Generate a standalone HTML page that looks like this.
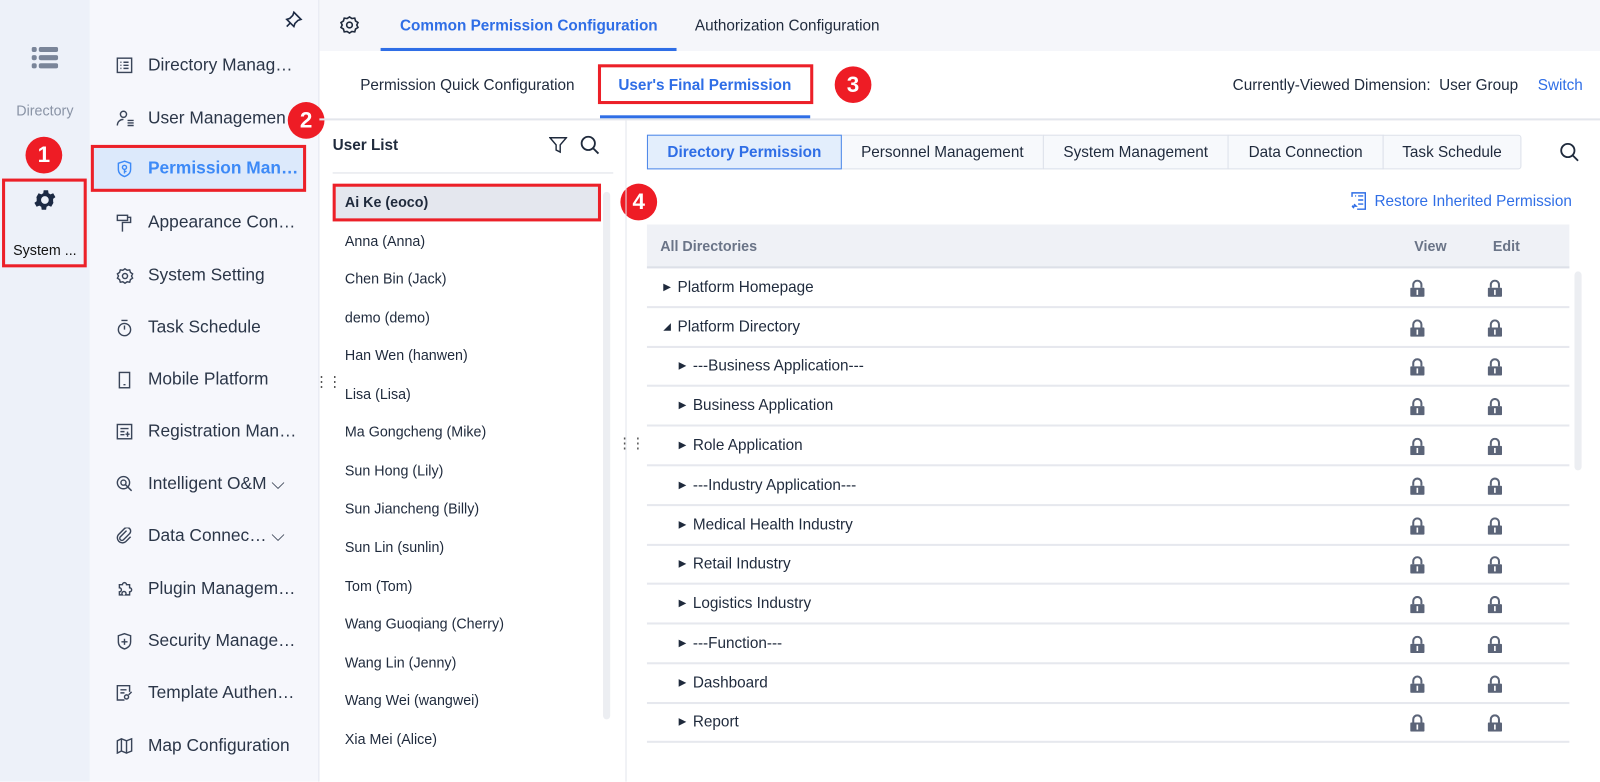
<!DOCTYPE html>
<html><head><meta charset="utf-8"><style>
*{box-sizing:border-box;margin:0;padding:0}
body{width:1600px;height:766px;overflow:hidden;background:#fff;font-family:"Liberation Sans",sans-serif;color:#1f2a3c;position:relative}
#w{position:absolute;left:0;top:0;width:1568px;height:751px;transform:scale(1.0204);transform-origin:0 0}
.a{position:absolute}
.rail{left:0;top:0;width:88px;height:766px;background:#edf1f9}
.menu{left:88px;top:0;width:225px;height:766px;background:#f6f7fc;border-right:1px solid #e3e6ee}
.mi{position:absolute;left:0;width:225px;height:40px;line-height:40px;font-size:17px;color:#2b3648;padding-left:57px;white-space:nowrap}
.mi svg{position:absolute;left:26px;top:12px}
.top{left:313px;top:0;width:1287px;height:50px;background:#f5f6fa}
.badge{position:absolute;width:36px;height:36px;border-radius:50%;background:#ee1c25;color:#fff;font-weight:bold;font-size:22px;text-align:center;line-height:36px}
.red{position:absolute;border:3px solid #ec2028}
.ul{position:absolute;left:338px;font-size:14px;color:#1f2a3c}
.row{position:absolute;left:634px;width:904px;height:39px;border-bottom:2px solid #e6e8ee;font-size:15px;line-height:38px}
.row .t{position:absolute}
.lock{position:absolute;top:11px;width:14px;height:17px}
.tab{position:absolute;top:132px;height:34px;line-height:34px;font-size:15px;text-align:center;border:1px solid #dde1ea;background:#f7f9fc;color:#1f2a3c}
</style></head><body><div id="w">
<div class="a rail"></div>
<svg class="a" style="left:31px;top:46px" width="26" height="22" viewBox="0 0 26 22"><g fill="#7a8599"><rect x="0" y="0" width="5" height="5" rx="2"/><rect x="7" y="0" width="19" height="5" rx="2"/><rect x="0" y="8" width="5" height="5" rx="2"/><rect x="7" y="8" width="19" height="5" rx="2"/><rect x="0" y="16" width="5" height="5" rx="2"/><rect x="7" y="16" width="19" height="5" rx="2"/></g></svg>
<div class="a" style="left:0;width:88px;top:100px;text-align:center;font-size:14px;color:#8a94a6">Directory</div>
<svg class="a" style="left:31px;top:183px" width="26" height="26" viewBox="0 0 24 24"><path fill="#1c2a44" d="M19.4 13a7.5 7.5 0 0 0 0-2l2.1-1.6-2-3.5-2.5 1a7.6 7.6 0 0 0-1.7-1l-.4-2.7h-4l-.4 2.7a7.6 7.6 0 0 0-1.7 1l-2.5-1-2 3.5L4.6 11a7.5 7.5 0 0 0 0 2l-2.1 1.600 2 3.5 2.5-1a7.6 7.6 0 0 0 1.7 1l.4 2.7h4l.4-2.7a7.6 7.6 0 0 0 1.7-1l2.5 1 2-3.5zM12 15.5a3.5 3.5 0 1 1 0-7 3.5 3.5 0 0 1 0 7z"/></svg>
<div class="a" style="left:4px;top:237px;width:80px;text-align:center;font-size:14px;color:#111">System ...</div>
<div class="red" style="left:2px;top:175px;width:83px;height:87px"></div>
<div class="badge" style="left:25px;top:134px">1</div>

<div class="a menu">
<svg class="a" style="left:191px;top:10px" width="18" height="18" viewBox="0 0 18 18" fill="none" stroke="#1c2a44" stroke-width="1.6"><path d="M9 2l7 7-3 1-3 3-1 3-7-7 3-1 3-3zM2 16l4-4"/></svg>
<div class="mi" style="top:44px">Directory Manag…<svg width="16" height="16" viewBox="0 0 16 16" fill="none" stroke="#3a4559" stroke-width="1.4"><rect x="1" y="1" width="14" height="14"/><path d="M4 5h1M7 5h5M4 8h1M7 8h5M4 11h1M7 11h5"/></svg></div>
<div class="mi" style="top:96px">User Managemen<svg width="18" height="16" viewBox="0 0 18 16" fill="none" stroke="#3a4559" stroke-width="1.4"><circle cx="7" cy="4" r="3"/><path d="M1 15c0-4 3-6 6-6M11 10h6M11 12.5h6M11 15h6"/></svg></div>
<div class="a" style="left:2px;top:143px;width:207px;height:44px;background:#dce9fb"></div>
<div class="mi" style="top:145px;color:#3d8af7;font-weight:bold">Permission Man…<svg width="16" height="17" viewBox="0 0 16 17" fill="none" stroke="#3d8af7" stroke-width="1.4"><path d="M8 1l6 2v6c0 4-3 6-6 7-3-1-6-3-6-7V3z"/><circle cx="8" cy="7" r="2"/><path d="M8 9v4M8 11h2"/></svg></div>
<div class="red" style="left:1px;top:142px;width:211px;height:46px"></div>
<div class="mi" style="top:198px">Appearance Con…<svg width="16" height="18" viewBox="0 0 16 18" fill="none" stroke="#3a4559" stroke-width="1.4"><rect x="1" y="1" width="10" height="5"/><path d="M11 3h3v5H6v3M6 11v6"/></svg></div>
<div class="mi" style="top:250px">System Setting<svg width="17" height="17" viewBox="0 0 24 24" fill="none" stroke="#3a4559" stroke-width="2"><path d="M12 2l3 2 3.5-.5 1 3.5 3 2-1.5 3 1.5 3-3 2-1 3.5L15 20l-3 2-3-2-3.5.5-1-3.5-3-2 1.5-3-1.5-3 3-2 1-3.5L9 4z"/><circle cx="12" cy="12" r="3.5"/></svg></div>
<div class="mi" style="top:301px">Task Schedule<svg width="16" height="17" viewBox="0 0 16 17" fill="none" stroke="#3a4559" stroke-width="1.4"><circle cx="8" cy="10" r="6"/><path d="M5 1h6M8 6v4"/></svg></div>
<div class="mi" style="top:352px">Mobile Platform<svg width="16" height="17" viewBox="0 0 16 17" fill="none" stroke="#3a4559" stroke-width="1.4"><rect x="3" y="1" width="10" height="15"/><path d="M7 13h2"/></svg></div>
<div class="mi" style="top:403px">Registration Man…<svg width="16" height="16" viewBox="0 0 16 16" fill="none" stroke="#3a4559" stroke-width="1.4"><rect x="1" y="1" width="14" height="14"/><path d="M4 5h8M4 8h4M4 11h4M11 8v5M9 10.5h4"/></svg></div>
<div class="mi" style="top:454px">Intelligent O&amp;M ⌵<svg width="16" height="16" viewBox="0 0 16 16" fill="none" stroke="#3a4559" stroke-width="1.4"><circle cx="7" cy="7" r="6"/><circle cx="7" cy="7" r="2.5"/><path d="M9 9l6 6"/></svg></div>
<div class="mi" style="top:505px">Data Connec… ⌵<svg width="16" height="16" viewBox="0 0 16 16" fill="none" stroke="#3a4559" stroke-width="1.4"><path d="M10 3L4 9a2 2 0 0 0 3 3l6-6a3.5 3.5 0 0 0-5-5L2 7a5 5 0 0 0 7 7l5-5"/></svg></div>
<div class="mi" style="top:557px">Plugin Managem…<svg width="16" height="16" viewBox="0 0 16 16" fill="none" stroke="#3a4559" stroke-width="1.4"><path d="M3 4h3a2 2 0 1 1 4 0h3v3a2 2 0 1 1 0 4v3H9a2 2 0 1 0-3 0H3v-3a2 2 0 1 0 0-4z"/></svg></div>
<div class="mi" style="top:608px">Security Manage…<svg width="16" height="17" viewBox="0 0 16 17" fill="none" stroke="#3a4559" stroke-width="1.4"><path d="M8 1l6 2v6c0 4-3 6-6 7-3-1-6-3-6-7V3z"/><path d="M8 6v6M5 9h6"/></svg></div>
<div class="mi" style="top:659px">Template Authen…<svg width="16" height="16" viewBox="0 0 16 16" fill="none" stroke="#3a4559" stroke-width="1.4"><path d="M8 15H1V1h12v6M4 5h6M4 8h4"/><circle cx="10" cy="12" r="2"/><path d="M12 10l3-3"/></svg></div>
<div class="mi" style="top:711px">Map Configuration<svg width="16" height="16" viewBox="0 0 16 16" fill="none" stroke="#3a4559" stroke-width="1.4"><path d="M1 3l4-2 5 2 5-2v12l-5 2-5-2-4 2zM5 1v12M10 3v12"/></svg></div>
</div>
<div class="badge" style="left:282px;top:100px">2</div>
<div class="a" style="left:308px;top:366px;color:#555;font-size:14px;letter-spacing:-1px">⋮⋮</div>

<div class="a top"></div>
<svg class="a" style="left:333px;top:15px" width="19" height="19" viewBox="0 0 24 24" fill="none" stroke="#1f2a3c" stroke-width="2"><path d="M12 2l3 2 3.5-.5 1 3.5 3 2-1.5 3 1.5 3-3 2-1 3.5L15 20l-3 2-3-2-3.5.5-1-3.5-3-2 1.5-3-1.5-3 3-2 1-3.5L9 4z"/><circle cx="12" cy="12" r="3.5"/></svg>
<div class="a" style="left:392px;top:17px;font-size:15px;font-weight:bold;color:#2f6ee6">Common Permission Configuration</div>
<div class="a" style="left:373px;top:47px;width:290px;height:3px;background:#2f6ee6"></div>
<div class="a" style="left:681px;top:17px;font-size:15px;color:#1f2a3c">Authorization Configuration</div>

<div class="a" style="left:353px;top:75px;font-size:15px">Permission Quick Configuration</div>
<div class="a" style="left:606px;top:75px;font-size:15px;font-weight:bold;color:#2f6ee6">User's Final Permission</div>
<div class="red" style="left:586px;top:63px;width:211px;height:39px"></div>
<div class="a" style="left:588px;top:113px;width:206px;height:3px;background:#2f6ee6"></div>
<div class="badge" style="left:818px;top:65px">3</div>
<div class="a" style="left:1208px;top:75px;font-size:15px">Currently-Viewed Dimension:&nbsp; User Group</div>
<div class="a" style="left:1507px;top:75px;font-size:15px;color:#2f6ee6">Switch</div>
<div class="a" style="left:313px;top:116px;width:1287px;height:2px;background:#e3e6ec"></div>

<div class="a" style="left:326px;top:134px;font-size:15px;font-weight:bold">User List</div>
<svg class="a" style="left:538px;top:133px" width="18" height="18" viewBox="0 0 18 18" fill="none" stroke="#1f2a3c" stroke-width="1.4"><path d="M1 2h16l-6 7v7l-4-2V9z"/></svg>
<svg class="a" style="left:568px;top:132px" width="20" height="20" viewBox="0 0 20 20" fill="none" stroke="#1f2a3c" stroke-width="1.8"><circle cx="8.5" cy="8.5" r="6.5"/><path d="M13.5 13.5l5 5"/></svg>
<div class="a" style="left:326px;top:169px;width:275px;height:1px;background:#dde0e6"></div>
<div class="a" style="left:329px;top:182px;width:257px;height:34px;background:#e4e7ee"></div>
<div class="a" style="left:338px;top:190px;font-size:14px;font-weight:bold">Ai Ke (eoco)</div>
<div class="red" style="left:326px;top:180px;width:263px;height:37px"></div>
<div class="badge" style="left:608px;top:180px">4</div>
<div class="a" style="left:591px;top:188px;width:7px;height:517px;border-radius:4px;background:#eceef2"></div>
<div class="ul" style="top:228px">Anna (Anna)</div>
<div class="ul" style="top:265px">Chen Bin (Jack)</div>
<div class="ul" style="top:303px">demo (demo)</div>
<div class="ul" style="top:340px">Han Wen (hanwen)</div>
<div class="ul" style="top:378px">Lisa (Lisa)</div>
<div class="ul" style="top:415px">Ma Gongcheng (Mike)</div>
<div class="ul" style="top:453px">Sun Hong (Lily)</div>
<div class="ul" style="top:490px">Sun Jiancheng (Billy)</div>
<div class="ul" style="top:528px">Sun Lin (sunlin)</div>
<div class="ul" style="top:566px">Tom (Tom)</div>
<div class="ul" style="top:603px">Wang Guoqiang (Cherry)</div>
<div class="ul" style="top:641px">Wang Lin (Jenny)</div>
<div class="ul" style="top:678px">Wang Wei (wangwei)</div>
<div class="ul" style="top:716px">Xia Mei (Alice)</div>
<div class="a" style="left:613px;top:118px;width:1px;height:648px;background:#e3e6ec"></div>
<div class="a" style="left:605px;top:426px;color:#555;font-size:14px;letter-spacing:-1px">⋮⋮</div>

<div class="tab" style="left:634px;width:191px;background:#e3eefc;border-color:#4a86e8;color:#2f6ee6;font-weight:bold;z-index:2">Directory Permission</div>
<div class="tab" style="left:824px;width:199px">Personnel Management</div>
<div class="tab" style="left:1022px;width:182px">System Management</div>
<div class="tab" style="left:1203px;width:153px">Data Connection</div>
<div class="tab" style="left:1355px;width:136px;border-radius:0 3px 3px 0">Task Schedule</div>
<svg class="a" style="left:1528px;top:139px" width="20" height="20" viewBox="0 0 20 20" fill="none" stroke="#1f2a3c" stroke-width="1.8"><circle cx="8.5" cy="8.5" r="6.5"/><path d="M13.5 13.5l5 5"/></svg>
<svg class="a" style="left:1324px;top:188px" width="15" height="18" viewBox="0 0 15 18" fill="none" stroke="#2f6ee6" stroke-width="1.4"><path d="M4 1h10v16H6M1 5V1h3M4 4h1M7 4h5M7 8h5M7 12h5M1 14h4l-2-2M1 14l2 2"/></svg>
<div class="a" style="left:1347px;top:189px;font-size:15px;color:#2f6ee6">Restore Inherited Permission</div>

<div class="a" style="left:634px;top:220px;width:904px;height:43px;background:#eff1f6;border-bottom:2px solid #dde0e8"></div>
<div class="a" style="left:647px;top:233px;font-size:14px;font-weight:bold;color:#6a7487">All Directories</div>
<div class="a" style="left:1386px;top:233px;font-size:14px;font-weight:bold;color:#6a7487">View</div>
<div class="a" style="left:1463px;top:233px;font-size:14px;font-weight:bold;color:#6a7487">Edit</div>
<div class="a" style="left:1543px;top:266px;width:7px;height:195px;border-radius:4px;background:#eceef2"></div>

<svg width="0" height="0" style="position:absolute"><defs><symbol id="lk" viewBox="0 0 14 17"><path d="M3 8V5a4 4 0 0 1 8 0v3" fill="none" stroke="#5b6478" stroke-width="2"/><rect x="0" y="8" width="14" height="9" rx="1" fill="#5b6478"/><rect x="6.2" y="10" width="1.6" height="5" fill="#fff"/></symbol></defs></svg>

<div class="row" style="top:263px"><span class="t" style="left:16px;font-size:10px">▶</span><span class="t" style="left:30px">Platform Homepage</span><svg class="lock" style="left:748px"><use href="#lk"/></svg><svg class="lock" style="left:824px"><use href="#lk"/></svg></div>
<div class="row" style="top:302px"><span class="t" style="left:16px;font-size:10px">◢</span><span class="t" style="left:30px">Platform Directory</span><svg class="lock" style="left:748px"><use href="#lk"/></svg><svg class="lock" style="left:824px"><use href="#lk"/></svg></div>
<div class="row" style="top:340px"><span class="t" style="left:31px;font-size:10px">▶</span><span class="t" style="left:45px">---Business Application---</span><svg class="lock" style="left:748px"><use href="#lk"/></svg><svg class="lock" style="left:824px"><use href="#lk"/></svg></div>
<div class="row" style="top:379px"><span class="t" style="left:31px;font-size:10px">▶</span><span class="t" style="left:45px">Business Application</span><svg class="lock" style="left:748px"><use href="#lk"/></svg><svg class="lock" style="left:824px"><use href="#lk"/></svg></div>
<div class="row" style="top:418px"><span class="t" style="left:31px;font-size:10px">▶</span><span class="t" style="left:45px">Role Application</span><svg class="lock" style="left:748px"><use href="#lk"/></svg><svg class="lock" style="left:824px"><use href="#lk"/></svg></div>
<div class="row" style="top:457px"><span class="t" style="left:31px;font-size:10px">▶</span><span class="t" style="left:45px">---Industry Application---</span><svg class="lock" style="left:748px"><use href="#lk"/></svg><svg class="lock" style="left:824px"><use href="#lk"/></svg></div>
<div class="row" style="top:496px"><span class="t" style="left:31px;font-size:10px">▶</span><span class="t" style="left:45px">Medical Health Industry</span><svg class="lock" style="left:748px"><use href="#lk"/></svg><svg class="lock" style="left:824px"><use href="#lk"/></svg></div>
<div class="row" style="top:534px"><span class="t" style="left:31px;font-size:10px">▶</span><span class="t" style="left:45px">Retail Industry</span><svg class="lock" style="left:748px"><use href="#lk"/></svg><svg class="lock" style="left:824px"><use href="#lk"/></svg></div>
<div class="row" style="top:573px"><span class="t" style="left:31px;font-size:10px">▶</span><span class="t" style="left:45px">Logistics Industry</span><svg class="lock" style="left:748px"><use href="#lk"/></svg><svg class="lock" style="left:824px"><use href="#lk"/></svg></div>
<div class="row" style="top:612px"><span class="t" style="left:31px;font-size:10px">▶</span><span class="t" style="left:45px">---Function---</span><svg class="lock" style="left:748px"><use href="#lk"/></svg><svg class="lock" style="left:824px"><use href="#lk"/></svg></div>
<div class="row" style="top:651px"><span class="t" style="left:31px;font-size:10px">▶</span><span class="t" style="left:45px">Dashboard</span><svg class="lock" style="left:748px"><use href="#lk"/></svg><svg class="lock" style="left:824px"><use href="#lk"/></svg></div>
<div class="row" style="top:689px"><span class="t" style="left:31px;font-size:10px">▶</span><span class="t" style="left:45px">Report</span><svg class="lock" style="left:748px"><use href="#lk"/></svg><svg class="lock" style="left:824px"><use href="#lk"/></svg></div>
</div></body></html>
